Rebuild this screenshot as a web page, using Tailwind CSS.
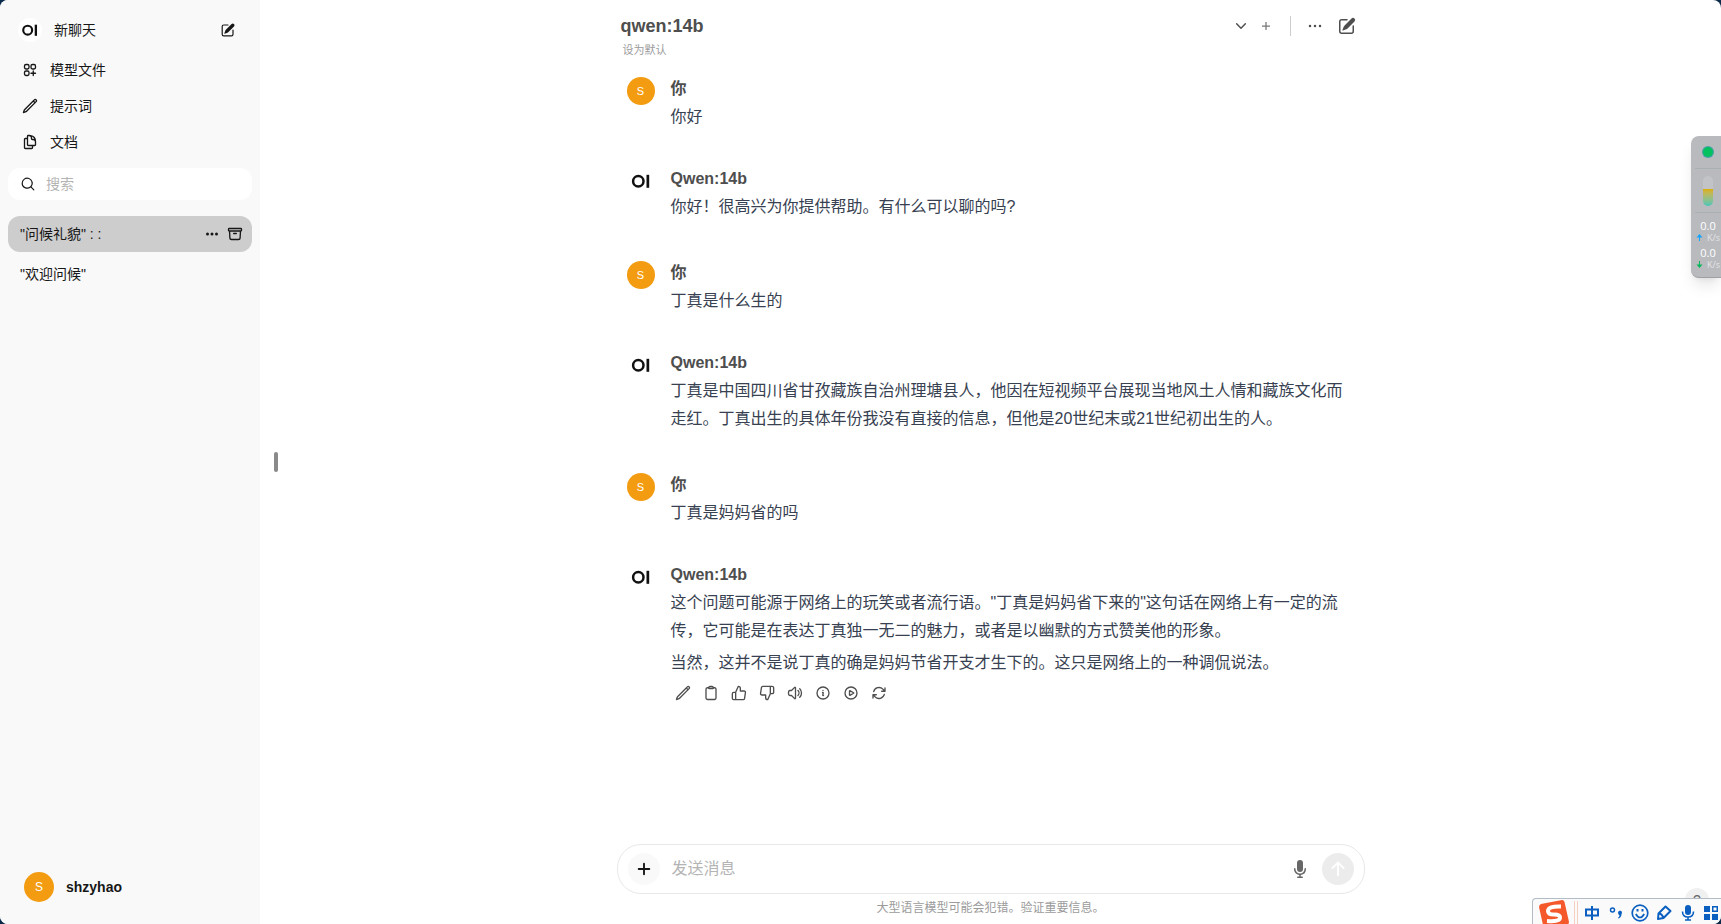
<!DOCTYPE html>
<html lang="zh-CN">

<head>
    <meta charset="UTF-8" />
    <title>Open WebUI</title>
    <meta name="viewport" content="width=device-width, initial-scale=1" />
    <script src="https://cdn.jsdelivr.net/npm/@tailwindcss/browser@4"></script>
</head>

<body class="bg-[#0b2a4a] font-['Liberation_Sans','Noto_Sans_CJK_SC',sans-serif] text-[#171717]">

    <!-- Shared icons -->
    <svg class="hidden">
        <symbol id="logo" viewBox="0 0 28 28">
            <circle cx="11.300" cy="14.200" r="5.200" fill="none" stroke="#111" stroke-width="2.500" />
            <rect x="19.500" y="7.800" width="2.700" height="13" fill="#111" />
        </symbol>
        <symbol id="edit" viewBox="0 0 20 20" fill="currentColor">
            <path d="m5.433 13.917 1.262-3.155A4 4 0 0 1 7.58 9.42l6.92-6.918a2.121 2.121 0 0 1 3 3l-6.92 6.918c-.383.383-.84.685-1.343.886l-3.154 1.262a.5.5 0 0 1-.65-.65Z" />
            <path d="M3.5 5.75c0-.69.56-1.25 1.25-1.25H10A.75.75 0 0 0 10 3H4.75A2.75 2.75 0 0 0 2 5.75v9.5A2.75 2.75 0 0 0 4.75 18h9.5A2.75 2.75 0 0 0 17 15.25V10a.75.75 0 0 0-1.5 0v5.25c0 .69-.56 1.25-1.25 1.25h-9.5c-.69 0-1.25-.56-1.25-1.25v-9.5Z" />
        </symbol>
        <symbol id="pencil" viewBox="0 0 24 24" fill="none" stroke="currentColor" stroke-linecap="round" stroke-linejoin="round">
            <path d="m16.862 4.487 1.687-1.688a1.875 1.875 0 1 1 2.652 2.652L6.832 19.82a4.5 4.5 0 0 1-1.897 1.13l-2.685.8.8-2.685a4.5 4.5 0 0 1 1.13-1.897L16.863 4.487Zm0 0L19.5 7.125" />
        </symbol>
        <symbol id="dots" viewBox="0 0 24 24" fill="none" stroke="currentColor" stroke-linecap="round" stroke-linejoin="round">
            <path d="M6.75 12a.75.75 0 1 1-1.5 0 .75.75 0 0 1 1.5 0ZM12.75 12a.75.75 0 1 1-1.5 0 .75.75 0 0 1 1.5 0ZM18.75 12a.75.75 0 1 1-1.5 0 .75.75 0 0 1 1.5 0Z" />
        </symbol>
        <symbol id="plus" viewBox="0 0 16 16" fill="currentColor">
            <path d="M8.75 3.75a.75.75 0 0 0-1.5 0v3.5h-3.5a.75.75 0 0 0 0 1.5h3.5v3.5a.75.75 0 0 0 1.5 0v-3.5h3.5a.75.75 0 0 0 0-1.5h-3.5v-3.5Z" />
        </symbol>
    </svg>

    <div class="relative h-screen flex overflow-hidden rounded-lg bg-white">

        <!-- Sidebar -->
        <aside class="w-[260px] shrink-0 bg-[#f9f9f9] flex flex-col px-2 pt-3 pb-[17px] text-sm">
            <a href="#" class="h-9 flex items-center pl-[10px] pr-4">
                <svg class="size-6 rounded-full bg-white"><use href="#logo" /></svg>
                <span class="ml-3 flex-1">新聊天</span>
                <svg class="size-4"><use href="#edit" /></svg>
            </a>
            <nav class="mt-1">
                <a href="#" class="h-9 flex items-center gap-3 pl-[14px]">
                    <svg class="size-4" viewBox="0 0 24 24" fill="none" stroke="currentColor" stroke-width="2" stroke-linecap="round" stroke-linejoin="round">
                        <path d="M13.5 16.875h3.375m0 0h3.375m-3.375 0V13.5m0 3.375v3.375M6 10.5h2.25a2.25 2.25 0 0 0 2.25-2.25V6a2.25 2.25 0 0 0-2.25-2.25H6A2.25 2.25 0 0 0 3.75 6v2.25A2.25 2.25 0 0 0 6 10.5Zm0 9.75h2.25A2.25 2.25 0 0 0 10.5 18v-2.25a2.25 2.25 0 0 0-2.25-2.25H6a2.25 2.25 0 0 0-2.25 2.25V18A2.25 2.25 0 0 0 6 20.25Zm9.75-9.75H18a2.25 2.25 0 0 0 2.25-2.25V6A2.25 2.25 0 0 0 18 3.75h-2.25A2.25 2.25 0 0 0 13.5 6v2.25a2.25 2.25 0 0 0 2.25 2.25Z" />
                    </svg>
                    模型文件
                </a>
                <a href="#" class="h-9 flex items-center gap-3 pl-[14px]">
                    <svg class="size-4 stroke-2"><use href="#pencil" /></svg>
                    提示词
                </a>
                <a href="#" class="h-9 flex items-center gap-3 pl-[14px]">
                    <svg class="size-4" viewBox="0 0 24 24" fill="none" stroke="currentColor" stroke-width="2" stroke-linecap="round" stroke-linejoin="round">
                        <path d="M15.75 17.25v3.375c0 .621-.504 1.125-1.125 1.125h-9.75a1.125 1.125 0 0 1-1.125-1.125V7.875c0-.621.504-1.125 1.125-1.125H6.75a9.06 9.06 0 0 1 1.5.124m7.5 10.376h3.375c.621 0 1.125-.504 1.125-1.125V11.25c0-4.46-3.243-8.161-7.5-8.876a9.06 9.06 0 0 0-1.5-.124H9.375c-.621 0-1.125.504-1.125 1.125v3.5m7.5 10.375H9.375a1.125 1.125 0 0 1-1.125-1.125v-9.25m12 6.625v-1.875a3.375 3.375 0 0 0-3.375-3.375h-1.5a1.125 1.125 0 0 1-1.125-1.125v-1.5a3.375 3.375 0 0 0-3.375-3.375H9.75" />
                    </svg>
                    文档
                </a>
            </nav>

            <label class="mt-2 h-8 flex items-center gap-[10px] rounded-xl bg-white pl-3">
                <svg class="size-4 shrink-0" viewBox="0 0 20 20" fill="currentColor">
                    <path fill-rule="evenodd" d="M9 3.5a5.5 5.5 0 100 11 5.5 5.5 0 000-11zM2 9a7 7 0 1112.452 4.391l3.328 3.329a.75.75 0 11-1.06 1.06l-3.329-3.328A7 7 0 012 9z" clip-rule="evenodd" />
                </svg>
                <input type="text" placeholder="搜索" aria-label="搜索" class="w-full bg-transparent outline-none placeholder:text-[#b4b4b4]" />
            </label>

            <div class="mt-4 flex flex-col gap-1">
                <div class="h-9 flex items-center rounded-xl bg-[#cdcdcd] pl-3 pr-[9px]">
                    <a href="#" class="flex-1">"问候礼貌" : :</a>
                    <button aria-label="更多" class="mr-[7px]">
                        <svg class="size-4" viewBox="0 0 16 16" fill="currentColor">
                            <path d="M2 8a1.5 1.5 0 1 1 3 0 1.5 1.5 0 0 1-3 0ZM6.5 8a1.5 1.5 0 1 1 3 0 1.5 1.5 0 0 1-3 0ZM12.5 6.5a1.5 1.5 0 1 0 0 3 1.5 1.5 0 0 0 0-3Z" />
                        </svg>
                    </button>
                    <button aria-label="归档">
                        <svg class="size-4" viewBox="0 0 24 24" fill="none" stroke="currentColor" stroke-width="2" stroke-linecap="round" stroke-linejoin="round">
                            <path d="m20.25 7.5-.625 10.632a2.25 2.25 0 0 1-2.247 2.118H6.622a2.25 2.25 0 0 1-2.247-2.118L3.75 7.5M10 11.25h4M3.375 7.5h17.25c.621 0 1.125-.504 1.125-1.125v-1.5c0-.621-.504-1.125-1.125-1.125H3.375c-.621 0-1.125.504-1.125 1.125v1.5c0 .621.504 1.125 1.125 1.125Z" />
                        </svg>
                    </button>
                </div>
                <a href="#" class="h-9 flex items-center pl-3">"欢迎问候"</a>
            </div>

            <button class="mt-auto h-10 flex items-center gap-3 pl-4 font-semibold">
                <span class="size-[30px] rounded-full bg-[#f39c12] text-white text-xs font-normal flex items-center justify-center">S</span>
                shzyhao
            </button>
        </aside>

        <!-- Sidebar handle -->
        <button aria-label="折叠侧边栏" class="self-center ml-[14px] w-1 h-5 rounded-full bg-[#8a8a8a]"></button>

        <!-- Chat -->
        <main class="flex-1 -ml-[18px] flex flex-col">
            <header class="w-full max-w-[748px] mx-auto h-[76px] pt-3 pl-1 pr-2 flex justify-between">
                <div>
                    <h1 class="text-lg leading-7 font-semibold text-[#4e4e4e]">qwen:14b</h1>
                    <button class="block ml-[2px] text-[11px] leading-5 text-[#9b9b9b]">设为默认</button>
                </div>
                <div class="h-7 flex items-center text-[#4e4e4e]">
                    <button aria-label="选择模型" class="mr-3">
                        <svg class="size-[14px]" viewBox="0 0 24 24" fill="none" stroke="currentColor" stroke-width="2.5" stroke-linecap="round" stroke-linejoin="round">
                            <path d="m19.5 8.25-7.5 7.5-7.5-7.5" />
                        </svg>
                    </button>
                    <button aria-label="添加模型" class="mr-[18px]">
                        <svg class="size-3" viewBox="0 0 24 24" fill="none" stroke="#777" stroke-width="2.5">
                            <path d="M12 4v16M4 12h16" />
                        </svg>
                    </button>
                    <span class="w-px h-5 bg-[#cdcdcd] mr-[14px]"></span>
                    <button aria-label="更多" class="mr-3">
                        <svg class="size-5 stroke-[1.5]"><use href="#dots" /></svg>
                    </button>
                    <button aria-label="新聊天">
                        <svg class="size-5"><use href="#edit" /></svg>
                    </button>
                </div>
            </header>

            <div class="flex-1 min-h-0">
                <div class="w-full max-w-[748px] mx-auto pl-[10px] pr-4 leading-7 text-[#374151]">

                    <article class="flex gap-4 pb-[35px]">
                        <span class="mt-px size-7 shrink-0 rounded-full bg-[#f39c12] text-white text-[11px] flex items-center justify-center">S</span>
                        <div class="flex-1 pt-px">
                            <h2 class="leading-6 font-bold text-[#4e4e4e]">你</h2>
                            <p class="mt-[2px]">你好</p>
                        </div>
                    </article>
                    <article class="flex gap-4 pb-[39px]">
                        <svg class="mt-px size-7 shrink-0"><use href="#logo" /></svg>
                        <div class="flex-1 pt-px">
                            <h2 class="leading-6 font-bold text-[#4e4e4e]">Qwen:14b</h2>
                            <p class="mt-[2px]">你好！很高兴为你提供帮助。有什么可以聊的吗?</p>
                        </div>
                    </article>

                    <article class="flex gap-4 pb-[35px]">
                        <span class="mt-px size-7 shrink-0 rounded-full bg-[#f39c12] text-white text-[11px] flex items-center justify-center">S</span>
                        <div class="flex-1 pt-px">
                            <h2 class="leading-6 font-bold text-[#4e4e4e]">你</h2>
                            <p class="mt-[2px]">丁真是什么生的</p>
                        </div>
                    </article>
                    <article class="flex gap-4 pb-[39px]">
                        <svg class="mt-px size-7 shrink-0"><use href="#logo" /></svg>
                        <div class="flex-1 pt-px">
                            <h2 class="leading-6 font-bold text-[#4e4e4e]">Qwen:14b</h2>
                            <p class="mt-[2px]">丁真是中国四川省甘孜藏族自治州理塘县人，他因在短视频平台展现当地风土人情和藏族文化而走红。丁真出生的具体年份我没有直接的信息，但他是20世纪末或21世纪初出生的人。</p>
                        </div>
                    </article>

                    <article class="flex gap-4 pb-[35px]">
                        <span class="mt-px size-7 shrink-0 rounded-full bg-[#f39c12] text-white text-[11px] flex items-center justify-center">S</span>
                        <div class="flex-1 pt-px">
                            <h2 class="leading-6 font-bold text-[#4e4e4e]">你</h2>
                            <p class="mt-[2px]">丁真是妈妈省的吗</p>
                        </div>
                    </article>
                    <article class="flex gap-4">
                        <svg class="mt-px size-7 shrink-0"><use href="#logo" /></svg>
                        <div class="flex-1 pt-px">
                            <h2 class="leading-6 font-bold text-[#4e4e4e]">Qwen:14b</h2>
                            <p class="mt-[2px]">这个问题可能源于网络上的玩笑或者流行语。"丁真是妈妈省下来的"这句话在网络上有一定的流传，它可能是在表达丁真独一无二的魅力，或者是以幽默的方式赞美他的形象。</p>
                            <p class="mt-1">当然，这并不是说丁真的确是妈妈节省开支才生下的。这只是网络上的一种调侃说法。</p>
                            <div class="mt-2 pl-1 flex gap-3 text-[#4e4e4e]">
                                <button aria-label="编辑">
                                    <svg class="size-4 stroke-2"><use href="#pencil" /></svg>
                                </button>
                                <button aria-label="复制">
                                    <svg class="size-4" viewBox="0 0 24 24" fill="none" stroke="currentColor" stroke-width="2" stroke-linecap="round" stroke-linejoin="round">
                                        <path d="M15.666 3.888A2.25 2.25 0 0 0 13.5 2.25h-3c-1.03 0-1.9.693-2.166 1.638m7.332 0c.055.194.084.4.084.612v0a.75.75 0 0 1-.75.75H9a.75.75 0 0 1-.75-.75v0c0-.212.03-.418.084-.612m7.332 0c.646.049 1.288.11 1.927.184 1.1.128 1.907 1.077 1.907 2.185V19.5a2.25 2.25 0 0 1-2.25 2.25H6.75A2.25 2.25 0 0 1 4.5 19.5V6.257c0-1.108.806-2.057 1.907-2.185a48.208 48.208 0 0 1 1.927-.184" />
                                    </svg>
                                </button>
                                <button aria-label="赞">
                                    <svg class="size-4" viewBox="0 0 24 24" fill="none" stroke="currentColor" stroke-width="2" stroke-linecap="round" stroke-linejoin="round">
                                        <path d="M14 9V5a3 3 0 0 0-3-3l-4 9v11h11.28a2 2 0 0 0 2-1.7l1.38-9a2 2 0 0 0-2-2.3zM7 22H4a2 2 0 0 1-2-2v-7a2 2 0 0 1 2-2h3" />
                                    </svg>
                                </button>
                                <button aria-label="踩">
                                    <svg class="size-4" viewBox="0 0 24 24" fill="none" stroke="currentColor" stroke-width="2" stroke-linecap="round" stroke-linejoin="round">
                                        <path d="M10 15v4a3 3 0 0 0 3 3l4-9V2H5.72a2 2 0 0 0-2 1.7l-1.38 9a2 2 0 0 0 2 2.3zm7-13h2.67A2.31 2.31 0 0 1 22 4v7a2.31 2.31 0 0 1-2.33 2H17" />
                                    </svg>
                                </button>
                                <button aria-label="朗读">
                                    <svg class="size-4" viewBox="0 0 24 24" fill="none" stroke="currentColor" stroke-width="2" stroke-linecap="round" stroke-linejoin="round">
                                        <path d="M19.114 5.636a9 9 0 0 1 0 12.728M16.463 8.288a5.25 5.25 0 0 1 0 7.424M6.75 8.25l4.72-4.72a.75.75 0 0 1 1.28.53v15.88a.75.75 0 0 1-1.28.53l-4.72-4.72H4.51c-.88 0-1.704-.507-1.938-1.354A9.009 9.009 0 0 1 2.25 12c0-.83.112-1.633.322-2.396C2.806 8.756 3.63 8.25 4.51 8.25H6.75Z" />
                                    </svg>
                                </button>
                                <button aria-label="生成信息">
                                    <svg class="size-4" viewBox="0 0 24 24" fill="none" stroke="currentColor" stroke-width="2" stroke-linecap="round" stroke-linejoin="round">
                                        <path d="m11.25 11.25.041-.02a.75.75 0 0 1 1.063.852l-.708 2.836a.75.75 0 0 0 1.063.853l.041-.021M21 12a9 9 0 1 1-18 0 9 9 0 0 1 18 0Zm-9-3.75h.008v.008H12V8.25Z" />
                                    </svg>
                                </button>
                                <button aria-label="继续生成">
                                    <svg class="size-4" viewBox="0 0 24 24" fill="none" stroke="currentColor" stroke-width="2" stroke-linecap="round" stroke-linejoin="round">
                                        <path d="M21 12a9 9 0 1 1-18 0 9 9 0 0 1 18 0Z" />
                                        <path d="M15.91 11.672a.375.375 0 0 1 0 .656l-5.603 3.113a.375.375 0 0 1-.557-.328V8.887c0-.286.307-.466.557-.327l5.603 3.112Z" />
                                    </svg>
                                </button>
                                <button aria-label="重新生成">
                                    <svg class="size-4" viewBox="0 0 24 24" fill="none" stroke="currentColor" stroke-width="2" stroke-linecap="round" stroke-linejoin="round">
                                        <path d="M16.023 9.348h4.992v-.001M2.985 19.644v-4.992m0 0h4.992m-4.993 0 3.181 3.183a8.25 8.25 0 0 0 13.803-3.7M4.031 9.865a8.25 8.25 0 0 1 13.803-3.7l3.181 3.182m0-4.991v4.99" />
                                    </svg>
                                </button>
                            </div>
                        </div>
                    </article>
                </div>
            </div>

            <!-- Composer -->
            <form class="w-full max-w-[748px] mx-auto">
                <div class="h-[50px] flex items-center rounded-3xl border border-[#e8e8e8] bg-white px-[10px]">
                    <button type="button" aria-label="上传" class="size-8 shrink-0 rounded-full bg-[#f9f9f9] flex items-center justify-center">
                        <svg class="size-5"><use href="#plus" /></svg>
                    </button>
                    <input type="text" placeholder="发送消息" aria-label="发送消息" class="flex-1 ml-3 outline-none placeholder:text-[#b4b4b4]" />
                    <button type="button" aria-label="语音输入" class="mr-3 text-[#676767]">
                        <svg class="size-5" viewBox="0 0 20 20" fill="currentColor">
                            <path d="M7 4a3 3 0 0 1 6 0v6a3 3 0 1 1-6 0V4Z" />
                            <path d="M5.5 9.643a.75.75 0 0 0-1.5 0V10c0 3.06 2.29 5.585 5.25 5.954V17.5h-1.5a.75.75 0 0 0 0 1.5h4.5a.75.75 0 0 0 0-1.5h-1.5v-1.546A6.001 6.001 0 0 0 16 10v-.357a.75.75 0 0 0-1.5 0V10a4.5 4.5 0 0 1-9 0v-.357Z" />
                        </svg>
                    </button>
                    <button type="submit" aria-label="发送" disabled class="size-8 shrink-0 rounded-full bg-[#ececec] text-white flex items-center justify-center">
                        <svg class="size-5" viewBox="0 0 16 16" fill="currentColor">
                            <path fill-rule="evenodd" d="M8 14a.75.75 0 0 1-.75-.75V4.56L4.03 7.78a.75.75 0 0 1-1.06-1.06l4.5-4.5a.75.75 0 0 1 1.06 0l4.5 4.5a.75.75 0 0 1-1.06 1.06L8.75 4.56v8.69A.75.75 0 0 1 8 14Z" clip-rule="evenodd" />
                        </svg>
                    </button>
                </div>
                <p class="h-[30px] pt-[6px] text-center text-xs text-[#9b9b9b]">大型语言模型可能会犯错。验证重要信息。</p>
            </form>
        </main>

        <!-- Help button, mostly behind the input method bar -->
        <button class="absolute right-3 bottom-3 size-6 rounded-full bg-[#f0f0f0] text-sm text-[#666]">?</button>

        <!-- Network monitor -->
        <div class="absolute right-0 top-[136px] w-[30px] h-[142px] rounded-l-lg border-b border-[#9fa0a4] bg-[#b9babe] shadow-lg text-white">
            <div class="h-8 flex items-center justify-center pl-1">
                <span class="size-[10px] rounded-full bg-[#04c160] ring-1 ring-[#4a9fa8]"></span>
            </div>
            <div class="h-[45px] ml-1 border-y border-[#abb0b4] flex items-center justify-center">
                <div class="w-[10px] h-[30px] rounded-full bg-linear-to-b from-[#c2c3c6] from-45% via-[#d9b010] via-45% to-[#3fc6b8]"></div>
            </div>
            <div class="pt-[7px] pl-1 text-center font-['Open_Sans',sans-serif] text-[11px] leading-3">
                <div>0.0</div>
                <div class="flex items-center gap-1 pl-px text-[9px] leading-[11px] text-[#e4e4e6]">
                    <svg class="size-[7px] shrink-0" viewBox="0 0 7 7"><path d="M3.500 0 6.500 3.500H4V7H3V3.500H.5z" fill="#12a5ff" /></svg>K/s
                </div>
                <div class="mt-1">0.0</div>
                <div class="flex items-center gap-1 pl-px text-[9px] leading-[11px] text-[#e4e4e6]">
                    <svg class="size-[7px] shrink-0" viewBox="0 0 7 7"><path d="M3.500 7 6.500 3.500H4V0H3v3.500H.5z" fill="#04b85a" /></svg>K/s
                </div>
            </div>
        </div>

        <!-- Input method bar -->
        <div class="absolute right-0 bottom-0 w-[189px] h-[26px] pt-[2px] flex items-center overflow-hidden rounded-tl border-t border-l border-[#b3bcc6] bg-[#fafafa] text-[#0a5fc0]">
            <svg class="ml-[5px] w-8 h-[26px] shrink-0" viewBox="0 0 32 26">
                <path d="M3 4 24 0q2 0 2.500 2L31 22q0 2-2 3L8 29q-2 0-2.500-2L1 7q0-2 2-3Z" fill="#f4582b" />
                <path d="M23 6.500Q10 6 10 11q0 3.500 6 3.500 6 0 6 3 0 4.500-13 3.500" fill="none" stroke="#fff" stroke-width="4" />
            </svg>
            <span class="ml-1 w-1 h-full shrink-0 border-x border-[#f6cfc0]"></span>
            <svg class="ml-[6px] size-4" viewBox="0 0 16 16" fill="none" stroke="currentColor" stroke-width="2"><path d="M2 4.500h12v6H2zM8 1v14" /></svg>
            <svg class="ml-2 size-4" viewBox="0 0 16 16"><circle cx="4.500" cy="5" r="2" fill="none" stroke="currentColor" stroke-width="1.500" /><path d="M10 7.500a2 2 0 1 1 3.500 1.500q0 3-3 4.500l-.5-.8q1.500-1 1.500-2.500-1.500-.5-1.500-2.700Z" fill="currentColor" /></svg>
            <svg class="ml-[7px] size-[18px]" viewBox="0 0 18 18" fill="none" stroke="currentColor" stroke-width="1.700"><circle cx="9" cy="9" r="7.800" /><path d="M4.800 10q4.200 7 8.400 0" /><path d="M6.500 5v2.500M11.500 5v2.500" stroke-width="2" /></svg>
            <svg class="ml-[7px] size-4" viewBox="0 0 16 16" fill="none" stroke="currentColor" stroke-width="2" stroke-linejoin="round"><path d="M9.500 1.500 14.500 6 7.500 13 2 14l.5-5.500ZM2.500 8.500q3.500 0 5 4.500" /></svg>
            <svg class="ml-2 size-4" viewBox="0 0 16 16"><rect x="5" y="0" width="6" height="10" rx="3" fill="currentColor" /><path d="M2.500 6.500q0 5.500 5.500 5.500t5.500-5.500M8 12v3.500M5 15h6" fill="none" stroke="currentColor" stroke-width="1.600" /></svg>
            <svg class="ml-2 size-[14px] shrink-0" viewBox="0 0 14 14" fill="currentColor"><path d="M0 0h6v6H0zM0 8h6v6H0zM8 8h6v6H8z" /><path d="M8.750.75h4.500v4.500h-4.500z" fill="none" stroke="currentColor" stroke-width="1.500" /></svg>
        </div>
    </div>
</body>

</html>
